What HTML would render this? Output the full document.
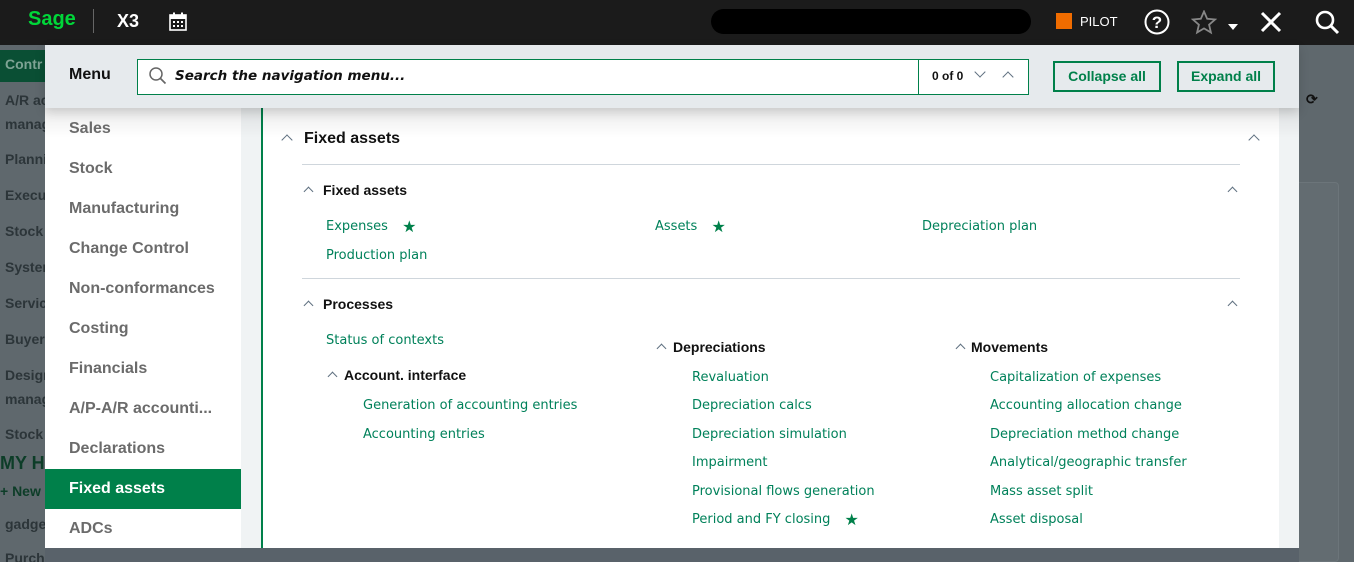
<!DOCTYPE html>
<html><head><meta charset="utf-8"><style>
*{margin:0;padding:0;box-sizing:border-box}
html,body{width:1354px;height:562px;overflow:hidden}
body{position:relative;background:#5f686d;font-family:"Liberation Sans",sans-serif}
.a{position:absolute;white-space:nowrap}
.top{left:0;top:0;width:1354px;height:45px;background:#1b1b1b}
.bgl{left:0;top:45px;width:45px;height:517px;background:#5f686d;overflow:hidden}
.bgl div{position:absolute;left:5px;font-weight:bold;font-size:14px;color:#2c3539}
.lnk{font-family:"DejaVu Sans","Liberation Sans",sans-serif;font-size:13px;color:#00815a;line-height:18px}
.nav{left:69px;font-weight:bold;font-size:16px;color:#6b6b6b}
.h{font-weight:bold;font-size:14px;color:#111}
.car{display:inline-block;width:8px;height:8px;border-left:1.6px solid #5f7080;border-top:1.6px solid #5f7080;transform:rotate(45deg)}
.star{color:#00804a;font-size:16px;line-height:18px;vertical-align:top}
.hr{height:1px;background:#cfd6dc}
.btn{border:2px solid #00804a;color:#00804a;font-weight:bold;font-size:14px;text-align:center;line-height:27px;height:31px}
</style></head><body>
<div class="a top"></div>
<div class="a" style="left:28px;top:8px;color:#00d639;font-size:20px;font-weight:bold">Sage</div>
<div class="a" style="left:93px;top:9px;width:1px;height:24px;background:#666"></div>
<div class="a" style="left:117px;top:11px;color:#fff;font-size:18px;font-weight:bold">X3</div>
<svg class="a" style="left:169px;top:12px" width="18" height="19" viewBox="0 0 18 19"><rect x="1" y="3" width="16" height="15" fill="none" stroke="#fff" stroke-width="1.6"/><rect x="1" y="3" width="16" height="4" fill="#fff"/><rect x="4" y="0.5" width="2" height="4" fill="#fff"/><rect x="12" y="0.5" width="2" height="4" fill="#fff"/><g fill="#fff"><rect x="4" y="9" width="2" height="2"/><rect x="8" y="9" width="2" height="2"/><rect x="12" y="9" width="2" height="2"/><rect x="4" y="13" width="2" height="2"/><rect x="8" y="13" width="2" height="2"/><rect x="12" y="13" width="2" height="2"/></g></svg>
<div class="a" style="left:711px;top:9px;width:320px;height:25px;border-radius:13px;background:#000"></div>
<div class="a" style="left:1056px;top:13px;width:16px;height:16px;background:#f06c00"></div>
<div class="a" style="left:1080px;top:14px;color:#fff;font-size:13px">PILOT</div>
<svg class="a" style="left:1144px;top:9px" width="26" height="26"><circle cx="13" cy="13" r="11.5" fill="none" stroke="#fff" stroke-width="2"/><text x="13" y="19" text-anchor="middle" fill="#fff" font-size="17" font-weight="bold" font-family="Liberation Sans">?</text></svg>
<svg class="a" style="left:1191px;top:10px" width="26" height="25" viewBox="0 0 26 25"><path d="M13 1.5l3.2 7.3 7.9.7-6 5.2 1.8 7.8L13 18.4 6.1 22.5l1.8-7.8-6-5.2 7.9-.7z" fill="none" stroke="#888" stroke-width="1.8"/></svg>
<div class="a" style="left:1228px;top:24px;width:0;height:0;border-left:5px solid transparent;border-right:5px solid transparent;border-top:6px solid #fff"></div>
<svg class="a" style="left:1260px;top:11px" width="22" height="22"><path d="M2 2L20 20M20 2L2 20" stroke="#fff" stroke-width="3"/></svg>
<svg class="a" style="left:1314px;top:9px" width="26" height="26"><circle cx="11" cy="11" r="8" fill="none" stroke="#fff" stroke-width="2.6"/><path d="M17 17l7 7" stroke="#fff" stroke-width="3"/></svg>

<div class="a bgl">
<div style="left:0;top:5px;width:45px;height:32px;background:#0a4f34"></div>
<div style="top:11px;color:#7ea394">Contr</div>
<div style="top:47px">A/R ac</div><div style="top:71px">manag</div>
<div style="top:106px">Planni</div><div style="top:142px">Execu</div><div style="top:178px">Stock</div>
<div style="top:214px">Syster</div><div style="top:250px">Servic</div><div style="top:286px">Buyer</div>
<div style="top:322px">Design</div><div style="top:346px">manag</div><div style="top:381px">Stock</div>
<div style="left:0;top:408px;font-size:18px;color:#0d3d28">MY HO</div>
<div style="left:0;top:438px;color:#0d3d28">+ New</div>
<div style="top:471px">gadge</div><div style="top:505px">Purchasing</div>
</div>
<div class="a" style="left:1299px;top:45px;width:55px;height:517px;background:#5f686d"></div>
<div class="a" style="left:1306px;top:91px;font-size:14px;color:#111;font-weight:bold">⟳</div>
<div class="a" style="left:1287px;top:182px;width:52px;height:380px;border:1px solid #6c757a;border-radius:4px;background:#636c71"></div>
<div class="a" style="left:45px;top:548px;width:1254px;height:14px;background:#59626a"></div>

<div class="a" style="left:45px;top:45px;width:1254px;height:63px;background:#e6eaed;box-shadow:0 4px 10px rgba(0,0,0,.15);z-index:2"></div>
<div class="a" style="left:69px;top:66px;font-weight:bold;font-size:16px;color:#111;z-index:3">Menu</div>
<div class="a" style="left:137px;top:59px;width:892px;height:36px;background:#fff;border:1px solid #00804a;z-index:3"></div>
<svg class="a" style="left:148px;top:66px;z-index:4" width="20" height="20"><circle cx="8" cy="8" r="6" fill="none" stroke="#666" stroke-width="1.5"/><path d="M12.5 12.5l5 5" stroke="#666" stroke-width="1.7"/></svg>
<div class="a" style="left:175px;top:68px;font-style:italic;font-weight:bold;color:#111;z-index:4;font-family:'DejaVu Sans',sans-serif;font-size:13.5px">Search the navigation menu...</div>
<div class="a" style="left:918px;top:60px;width:1px;height:34px;background:#00804a;z-index:4"></div>
<div class="a" style="left:932px;top:69px;font-size:12px;font-weight:bold;color:#111;z-index:4">0 of 0</div>
<div class="a car" style="left:976px;top:68px;transform:rotate(225deg);z-index:4"></div>
<div class="a car" style="left:1004px;top:73px;z-index:4"></div>
<div class="a btn" style="left:1053px;top:61px;width:108px;z-index:3">Collapse all</div>
<div class="a btn" style="left:1177px;top:61px;width:98px;z-index:3">Expand all</div>

<div class="a" style="left:45px;top:108px;width:196px;height:440px;background:#fff"></div>
<div class="a" style="left:241px;top:108px;width:20px;height:440px;background:#f0f3f4"></div>
<div class="a" style="left:261px;top:108px;width:2px;height:440px;background:#00804a"></div>
<div class="a" style="left:263px;top:108px;width:1016px;height:440px;background:#fff"></div>
<div class="a" style="left:1279px;top:108px;width:20px;height:440px;background:#f0f3f4"></div>
<div class="a" style="left:45px;top:108px;width:1254px;height:30px;background:linear-gradient(rgba(0,0,0,.08),rgba(0,0,0,0))"></div>

<div class="a nav" style="top:120px">Sales</div>
<div class="a nav" style="top:160px">Stock</div>
<div class="a nav" style="top:200px">Manufacturing</div>
<div class="a nav" style="top:240px">Change Control</div>
<div class="a nav" style="top:280px">Non-conformances</div>
<div class="a nav" style="top:320px">Costing</div>
<div class="a nav" style="top:360px">Financials</div>
<div class="a nav" style="top:400px">A/P-A/R accounti...</div>
<div class="a nav" style="top:440px">Declarations</div>
<div class="a" style="left:45px;top:469px;width:196px;height:40px;background:#00804a"></div>
<div class="a nav" style="top:480px;color:#fff">Fixed assets</div>
<div class="a nav" style="top:520px">ADCs</div>

<div class="a car" style="left:283px;top:136px"></div>
<div class="a h" style="left:304px;top:130px;font-size:16px">Fixed assets</div>
<div class="a car" style="left:1250px;top:136px"></div>
<div class="a hr" style="left:302px;top:164px;width:938px"></div>
<div class="a car" style="left:305px;top:188px;width:7px;height:7px"></div>
<div class="a h" style="left:323px;top:182px">Fixed assets</div>
<div class="a car" style="left:1229px;top:188px;width:7px;height:7px"></div>
<div class="a lnk" style="left:326px;top:218px">Expenses <span class="star" style="margin-left:10px">★</span></div>
<div class="a lnk" style="left:655px;top:218px">Assets <span class="star" style="margin-left:10px">★</span></div>
<div class="a lnk" style="left:922px;top:218px">Depreciation plan</div>
<div class="a lnk" style="left:326px;top:247px">Production plan</div>
<div class="a hr" style="left:302px;top:278px;width:938px"></div>
<div class="a car" style="left:305px;top:302px;width:7px;height:7px"></div>
<div class="a h" style="left:323px;top:296px">Processes</div>
<div class="a car" style="left:1229px;top:302px;width:7px;height:7px"></div>
<div class="a lnk" style="left:326px;top:332px">Status of contexts</div>
<div class="a car" style="left:329px;top:373px;width:7px;height:7px"></div>
<div class="a h" style="left:344px;top:367px">Account. interface</div>
<div class="a lnk" style="left:363px;top:397px">Generation of accounting entries</div>
<div class="a lnk" style="left:363px;top:426px">Accounting entries</div>
<div class="a car" style="left:658px;top:345px;width:7px;height:7px"></div>
<div class="a h" style="left:673px;top:339px">Depreciations</div>
<div class="a lnk" style="left:692px;top:369px">Revaluation</div>
<div class="a lnk" style="left:692px;top:397px">Depreciation calcs</div>
<div class="a lnk" style="left:692px;top:426px">Depreciation simulation</div>
<div class="a lnk" style="left:692px;top:454px">Impairment</div>
<div class="a lnk" style="left:692px;top:483px">Provisional flows generation</div>
<div class="a lnk" style="left:692px;top:511px">Period and FY closing <span class="star" style="margin-left:10px">★</span></div>
<div class="a car" style="left:957px;top:345px;width:7px;height:7px"></div>
<div class="a h" style="left:971px;top:339px">Movements</div>
<div class="a lnk" style="left:990px;top:369px">Capitalization of expenses</div>
<div class="a lnk" style="left:990px;top:397px">Accounting allocation change</div>
<div class="a lnk" style="left:990px;top:426px">Depreciation method change</div>
<div class="a lnk" style="left:990px;top:454px">Analytical/geographic transfer</div>
<div class="a lnk" style="left:990px;top:483px">Mass asset split</div>
<div class="a lnk" style="left:990px;top:511px">Asset disposal</div>
</body></html>
